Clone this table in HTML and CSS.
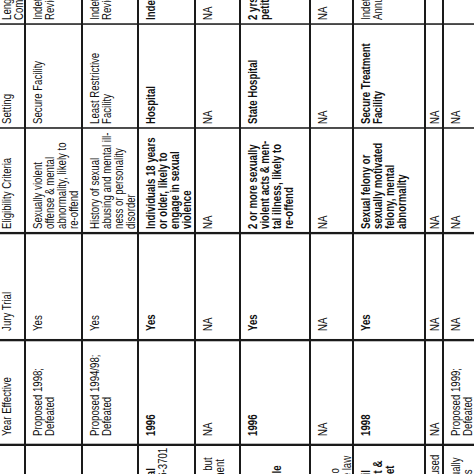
FILE: index.html
```html
<!DOCTYPE html>
<html lang="en">
<head>
<meta charset="utf-8">
<title>Sexually violent predator statutes by state</title>
<link rel="stylesheet" href="styles.css">
</head>
<body>
<div class="stage">
  <div class="sheet">
    <div class="row head">
      <div class="cell state">State</div>
      <div class="cell year">Year Effective</div>
      <div class="cell jury">Jury Trial</div>
      <div class="cell elig">Eligibility Criteria</div>
      <div class="cell set">Setting</div>
      <div class="cell len">Length of<br>Commitment</div>
    </div>
    <div class="row">
      <div class="cell state">Alabama</div>
      <div class="cell year">Proposed 1998;<br>Defeated</div>
      <div class="cell jury">Yes</div>
      <div class="cell elig">Sexually violent<br>offense &amp; mental<br>abnormality, likely to<br>re-offend</div>
      <div class="cell set">Secure Facility</div>
      <div class="cell len">Indeterminate;<br>Review annually</div>
    </div>
    <div class="row">
      <div class="cell state">Alaska</div>
      <div class="cell year">Proposed 1994/98;<br>Defeated</div>
      <div class="cell jury">Yes</div>
      <div class="cell elig">History of sexual<br>abusing and mental ill-<br>ness or personality<br>disorder</div>
      <div class="cell set">Least Restrictive<br>Facility</div>
      <div class="cell len">Indeterminate;<br>Review annually</div>
    </div>
    <div class="row bold">
      <div class="cell state">Arizona: Special<br><span class="reg">Persons ARS 36-3701</span></div>
      <div class="cell year">1996</div>
      <div class="cell jury">Yes</div>
      <div class="cell elig">Individuals 18 years<br>or older, likely to<br>engage in sexual<br>violence</div>
      <div class="cell set">Hospital</div>
      <div class="cell len">Indeterminate</div>
    </div>
    <div class="row">
      <div class="cell state">Arkansas; none, but<br>mental commitment</div>
      <div class="cell year">NA</div>
      <div class="cell jury">NA</div>
      <div class="cell elig">NA</div>
      <div class="cell set">NA</div>
      <div class="cell len">NA</div>
    </div>
    <div class="row bold">
      <div class="cell state">California<br>W&amp;I Code<br>§ 6600, Schedule</div>
      <div class="cell year">1996</div>
      <div class="cell jury">Yes</div>
      <div class="cell elig">2 or more sexually<br>violent acts &amp; men-<br>tal illness, likely to<br>re-offend</div>
      <div class="cell set">State Hospital</div>
      <div class="cell len">2 yrs, then<br>petition for release</div>
    </div>
    <div class="row">
      <div class="cell state">Colorado<br>Probation only no<br>commitment-like law</div>
      <div class="cell year">NA</div>
      <div class="cell jury">NA</div>
      <div class="cell elig">NA</div>
      <div class="cell set">NA</div>
      <div class="cell len">NA</div>
    </div>
    <div class="row bold">
      <div class="cell state">Florida Act Civil<br>Care, Treatment &amp;<br>Fla. St 394.910 et</div>
      <div class="cell year">1998</div>
      <div class="cell jury">Yes</div>
      <div class="cell elig">Sexual felony or<br>sexually motivated<br>felony, mental<br>abnormality</div>
      <div class="cell set">Secure Treatment<br>Facility</div>
      <div class="cell len"><span class="reg">Indeterminate<br>Annual review</span></div>
    </div>
    <div class="row thin">
      <div class="cell state">Connecticut: refused</div>
      <div class="cell year">NA</div>
      <div class="cell jury">NA</div>
      <div class="cell elig">NA</div>
      <div class="cell set">NA</div>
      <div class="cell len"></div>
    </div>
    <div class="row">
      <div class="cell state">Delaware - Sexually<br>Violent Predators</div>
      <div class="cell year">Proposed 1999;<br>Defeated</div>
      <div class="cell jury">NA</div>
      <div class="cell elig">NA</div>
      <div class="cell set">NA</div>
      <div class="cell len"></div>
    </div>
  </div>
</div>
</body>
</html>
```

FILE: styles.css
```css
html, body {
  margin: 0;
  padding: 0;
  background: #fff;
}

body {
  font-family: "Liberation Sans", Arial, Helvetica, sans-serif;
  font-size: 12.5px;
  line-height: 12px;
  color: #111;
}

.stage {
  width: 474px;
  height: 474px;
  overflow: hidden;
  background: #fff;
}

/* The table is laid out upright, then turned a quarter turn
   counter-clockwise (as in the scanned figure) and narrowed along
   the reading direction. */
.sheet {
  display: grid;
  grid-template-columns: 130px 133.76px 136.36px 133.76px 132.46px 150px;
  grid-template-rows: 25px 55px 54px 55px 43px 68px 41px 70px 16px 40px;
  gap: 2px 2.6px;
  width: max-content;
  background: #1a1a1a;
  transform-origin: 0 0;
  transform: translate(-1px, 546.1px) rotate(-90deg) scaleX(0.77);
}

.row {
  display: contents;
}

.cell {
  background: #fff;
  padding: 6px 4px 0 4px;
  white-space: nowrap;
  overflow: hidden;
}

.head .cell {
  padding-top: 2px;
}

.thin .cell {
  padding-top: 3px;
}

.year,
.jury {
  padding-left: 10.5px;
}

.bold .cell {
  font-weight: bold;
}

.bold .cell .reg {
  font-weight: normal;
}
```
